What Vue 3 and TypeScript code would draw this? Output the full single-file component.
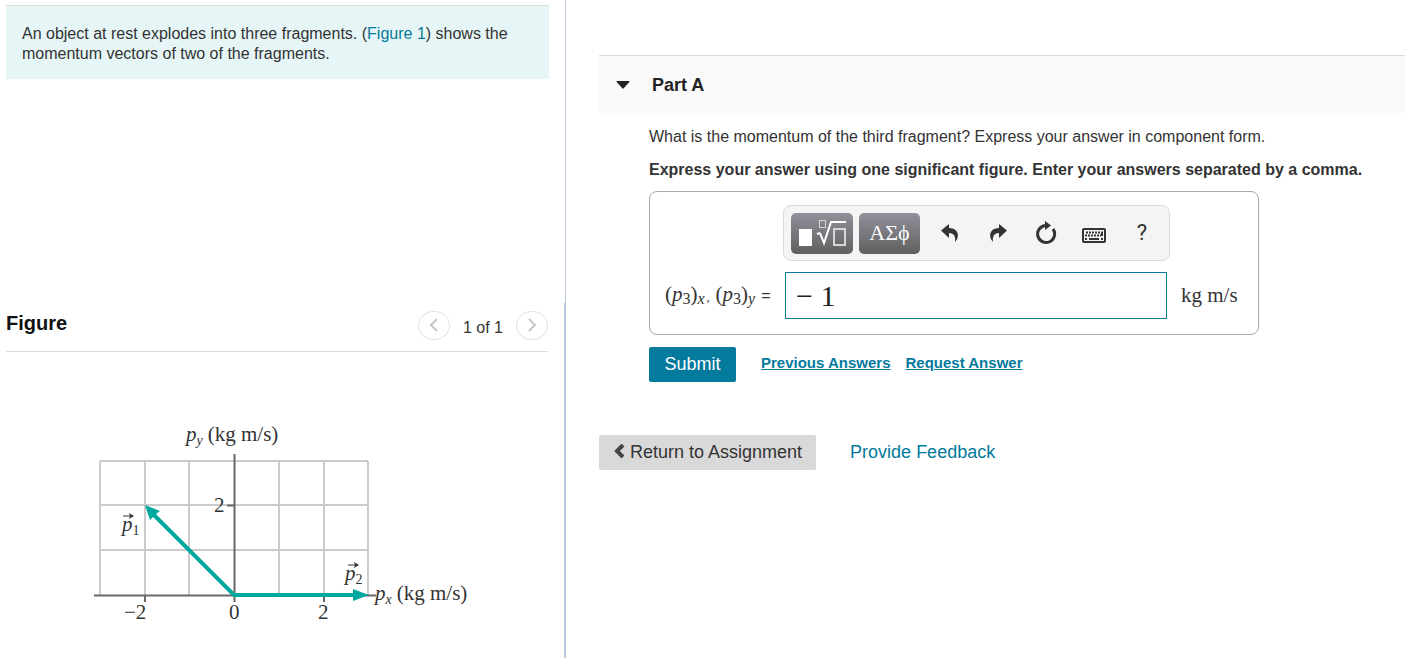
<script setup lang="ts">
import { ref } from 'vue'

const answer = ref('− 1')
const expanded = ref(true)

const gridX = [20, 65, 109, 199, 244, 288]
const gridY = [21, 65, 110]
</script>

<template>
  <main class="page">
    <section class="left">
      <div class="intro-pane">
        <p class="intro">
          <span>An object at rest explodes into three fragments. (</span><a href="#figure">Figure 1</a><span>) shows the</span>
          <span> momentum vectors of two of the fragments.</span>
        </p>
      </div>
      <div id="figure" class="figure-pane">
        <header class="figure-head">
          <h2>Figure</h2>
          <nav class="pager" aria-label="Figure">
            <button type="button" class="round" aria-label="Previous figure">
              <svg width="10" height="14" viewBox="0 0 10 14"><path d="M8 1 2 7l6 6" /></svg>
            </button>
            <span>1 of 1</span>
            <button type="button" class="round" aria-label="Next figure">
              <svg width="10" height="14" viewBox="0 0 10 14"><path d="m2 1 6 6-6 6" /></svg>
            </button>
          </nav>
        </header>
        <svg class="chart" width="400" height="210" viewBox="0 0 400 210" role="img" aria-label="Momentum vectors">
          <g class="grid">
            <line v-for="x in gridX" :key="'x' + x" :x1="x" y1="21" :x2="x" y2="155" />
            <line v-for="y in gridY" :key="'y' + y" x1="20" :y1="y" x2="288" :y2="y" />
          </g>
          <g class="axis">
            <path d="M14 155.500H296M154.500 14V162M65 155V162M244 155V162M147 65.500H155" />
          </g>
          <g class="vector">
            <path d="M276 155H154L74 75" />
            <path class="head" d="m65 65 15 6-4 3-3 3-3 3zM289 155l-16-6v12z" />
          </g>
          <g class="labels">
            <text x="106" y="1"><tspan class="it">p</tspan><tspan class="it sub" dy="4">y</tspan><tspan dy="-4" dx="5">(kg m/s)</tspan></text>
            <text x="295" y="160"><tspan class="it">p</tspan><tspan class="it sub" dy="4">x</tspan><tspan dy="-4" dx="5">(kg m/s)</tspan></text>
            <text x="42" y="91"><tspan class="it">p</tspan><tspan class="sub" dy="4">1</tspan></text>
            <text x="265" y="140"><tspan class="it">p</tspan><tspan class="sub" dy="4">2</tspan></text>
            <text x="134" y="72">2</text>
            <text x="44" y="179">−2</text>
            <text x="149" y="179">0</text>
            <text x="238" y="179">2</text>
          </g>
          <path class="over" d="M43 76H52M268 125H277" />
          <path class="over-head" d="m54 76-5-3 1 3-1 3zM279 125l-5-3 1 3-1 3z" />
        </svg>
      </div>
    </section>

    <section class="right">
      <header class="part-head">
        <button type="button" class="part-toggle" :aria-expanded="expanded" @click="expanded = !expanded">
          <svg width="14" height="8" viewBox="0 0 14 8"><path d="M1 0h12q1 0 .3 1L8 7q-1 1-2 0L.7 1Q0 0 1 0z" /></svg>
          <span>Part A</span>
        </button>
      </header>

      <div class="part-body">
        <p class="question">What is the momentum of the third fragment? Express your answer in component form.</p>
        <p class="hint">Express your answer using one significant figure. Enter your answers separated by a comma.</p>

        <div class="answer-box">
          <div class="toolbar" role="toolbar">
            <button type="button" class="dark templates" aria-label="Templates">
              <svg width="48" height="28" viewBox="0 0 48 28">
                <rect x="1" y="10" width="13" height="17" fill="#fff" />
                <rect x="21.500" y="1.500" width="6" height="7" class="box" />
                <path d="m19 15 3-1" class="root" />
                <path d="m22 14 4 10 7-21h15" class="root thin" />
                <rect x="36" y="10" width="11" height="16" class="box wide" />
              </svg>
            </button>
            <button type="button" class="dark greek">ΑΣϕ</button>
            <button type="button" class="tool" aria-label="Undo">
              <svg width="18" height="20" viewBox="0 0 18 20"><path class="solid" d="M0 7.500 8 1v4q8 0 9 7 0 4-3 7 1-4-1-7-2-2-5-2v5z" /></svg>
            </button>
            <button type="button" class="tool" aria-label="Redo">
              <svg width="18" height="20" viewBox="0 0 18 20"><path class="solid" d="M18 7.500 10 1v4q-8 0-9 7 0 4 3 7-1-4 1-7 2-2 5-2v5z" /></svg>
            </button>
            <button type="button" class="tool" aria-label="Reset">
              <svg width="22" height="24" viewBox="0 0 22 24"><path class="stroke" d="M11 4.500a8.500 8.500 0 1 0 7 3.500" /><path class="solid" d="m10 0 6 4.500-6 4.500z" /></svg>
            </button>
            <button type="button" class="tool low" aria-label="Keyboard">
              <svg width="24" height="15" viewBox="0 0 24 15">
                <rect x="1" y="1" width="22" height="13" rx="1" class="kb" />
                <path class="keys" d="M4 4.500H21M3 7.500H19" />
                <path class="bar" d="M3 11H5M7 11H17M19 11H21M20 4V8" />
              </svg>
            </button>
            <button type="button" class="tool help" aria-label="Help">?</button>
          </div>
          <label class="math" for="answer">
            <span class="term"><span>(</span><i>p</i><sub>3</sub><span>)</span><sub><i>x</i></sub><small>,</small></span>
            <span class="term"><span>(</span><i>p</i><sub>3</sub><span>)</span><sub><i>y</i></sub></span>
            <span class="eq">=</span>
          </label>
          <input id="answer" v-model="answer" class="field" type="text" />
          <span class="unit">kg m/s</span>
        </div>

        <div class="actions">
          <button type="button" class="submit">Submit</button>
          <a href="#previous">Previous Answers</a>
          <a href="#request">Request Answer</a>
        </div>
      </div>

      <footer class="bottom">
        <button type="button" class="return">
          <svg width="11" height="16" viewBox="0 0 11 16"><path d="M9 1 3 7l6 6" /></svg>
          <span>Return to Assignment</span>
        </button>
        <a href="#feedback">Provide Feedback</a>
      </footer>
    </section>
  </main>
</template>

<style>
body {
  background: #fff;
}
</style>

<style scoped>
* {
  box-sizing: border-box;
}
.page {
  display: flex;
  min-height: 100vh;
  font: 16px/20px "Liberation Sans", Arial, sans-serif;
  color: #333;
}
button {
  font: inherit;
  color: inherit;
  border: 0;
  padding: 0;
  background: none;
  cursor: pointer;
}
p,
h2 {
  margin: 0;
}
a {
  color: #047a9c;
  text-decoration: none;
}
.left {
  display: flex;
  flex-direction: column;
  flex: 0 0 566px;
}
.intro-pane {
  flex: 0 0 303px;
  padding: 5px 16px 0 6px;
  border-right: 1px solid #bdcbdd;
}
.intro {
  padding: 18px 16px 15px;
  border-top: 1px solid #d5dfe0;
  background: #e6f6f6;
}
.figure-pane {
  flex: 1;
  padding: 0 16px 0 6px;
  border-right: 2px solid #b8cade;
}
.figure-head {
  display: flex;
  align-items: center;
  justify-content: space-between;
  height: 49px;
  padding-bottom: 4px;
  border-bottom: 1px solid #dcdcdc;
}
h2 {
  font-size: 20px;
  line-height: 24px;
  color: #111;
  padding-bottom: 4px;
}
.pager {
  display: flex;
  align-items: center;
  gap: 13px;
}
.pager span {
  padding-top: 6px;
}
.round {
  display: flex;
  align-items: center;
  justify-content: center;
  width: 32px;
  height: 29px;
  border: 1px solid #e4e4e4;
  border-radius: 50%;
}
.round path {
  fill: none;
  stroke: #c4c6c8;
  stroke-width: 2;
}
.chart {
  display: block;
  margin: 88px 0 0 74px;
  overflow: visible;
}
.grid line {
  stroke: #cbcbce;
  stroke-width: 2;
}
.axis path {
  fill: none;
  stroke: #6a686a;
  stroke-width: 2;
}
.vector path {
  fill: none;
  stroke: #00a99d;
  stroke-width: 4;
}
.vector .head {
  fill: #00a99d;
  stroke: none;
}
.labels {
  font: 21px "Liberation Serif", "Times New Roman", serif;
  fill: #333;
}
.it {
  font-style: italic;
}
.labels .sub {
  font-size: 14px;
}
.over {
  stroke: #333;
  stroke-width: 1;
}
.over-head {
  fill: #333;
}
.right {
  flex: 1;
  min-width: 0;
  padding: 55px 0 0 33px;
}
.part-head {
  height: 58px;
  border-top: 1px solid #d9dfdf;
  background: #f9f9f9;
}
.part-toggle {
  display: flex;
  align-items: center;
  gap: 22px;
  height: 57px;
  padding-left: 17px;
  font-size: 18px;
  font-weight: bold;
  color: #222;
}
.part-toggle svg {
  fill: #222;
}
.part-body {
  padding: 14px 0 0 50px;
}
.hint {
  margin-top: 13px;
  font-weight: bold;
  white-space: nowrap;
}
.answer-box {
  display: grid;
  grid-template-columns: 122px 382px auto;
  align-items: center;
  row-gap: 11px;
  max-width: 610px;
  margin-top: 11px;
  padding: 13px 0 15px 13px;
  border: 1px solid #a8a8a8;
  border-radius: 8px;
}
.toolbar {
  grid-column: 2 / 4;
  display: flex;
  align-items: center;
  width: 387px;
  height: 56px;
  margin-left: -2px;
  padding: 0 3px 0 7px;
  border: 1px solid #d9d9d9;
  border-radius: 8px;
  background: #f4f4f4;
}
.dark {
  display: flex;
  align-items: center;
  justify-content: center;
  width: 62px;
  height: 41px;
  margin-right: 6px;
  border-radius: 5px;
  color: #fff;
  background: linear-gradient(#92909a, #606060);
}
.greek {
  width: 61px;
  font: 22px/24px "Liberation Serif", serif;
}
.box {
  fill: none;
  stroke: #d6d6d6;
  stroke-width: 1;
}
.wide {
  stroke-width: 2;
}
.root {
  fill: none;
  stroke: #fff;
  stroke-width: 2;
}
.tool {
  display: flex;
  align-items: center;
  justify-content: center;
  width: 48px;
  height: 40px;
}
.low {
  padding-top: 5px;
}
.solid {
  fill: #333;
}
.stroke {
  fill: none;
  stroke: #333;
  stroke-width: 3;
}
.kb {
  fill: none;
  stroke: #333;
  stroke-width: 2;
}
.keys {
  stroke: #333;
  stroke-width: 2;
  stroke-dasharray: 2 1;
}
.bar {
  stroke: #333;
  stroke-width: 2;
}
.help {
  font: 22px/24px Roboto, sans-serif;
}
.math {
  display: flex;
  align-items: baseline;
  padding-left: 2px;
  white-space: nowrap;
  font: 21px/24px "Liberation Serif", serif;
}
.term {
  margin-right: 6px;
}
.math sub {
  font-size: 16px;
  line-height: 1;
  vertical-align: -3px;
}
.math small {
  margin-left: 2px;
  font-size: 12px;
}
.math .eq {
  font: 16px/20px "Liberation Sans", sans-serif;
}
.field {
  width: 100%;
  height: 47px;
  padding: 0 10px;
  border: 1px solid #047a9c;
  border-radius: 0;
  outline: 0;
  font: 30px/36px "Liberation Serif", serif;
  color: #222;
  background: #fff;
}
.unit {
  padding: 0 0 2px 14px;
  font: 21px/24px "Liberation Serif", serif;
}
.actions {
  display: flex;
  align-items: center;
  gap: 15px;
  margin-top: 12px;
}
.submit {
  width: 87px;
  height: 35px;
  margin-right: 10px;
  padding-bottom: 2px;
  border-radius: 2px;
  font-size: 18px;
  color: #fff;
  background: #047a9c;
}
.actions a {
  padding-bottom: 3px;
  font-size: 15px;
  font-weight: bold;
  text-decoration: underline;
}
.bottom {
  display: flex;
  align-items: center;
  gap: 34px;
  margin-top: 53px;
  font-size: 18px;
}
.bottom a {
  padding-bottom: 2px;
}
.return {
  display: flex;
  align-items: center;
  gap: 5px;
  height: 35px;
  padding: 0 14px 2px 15px;
  border-radius: 2px;
  background: #d9d9d9;
}
.return path {
  fill: none;
  stroke: #444;
  stroke-width: 4;
}
</style>
